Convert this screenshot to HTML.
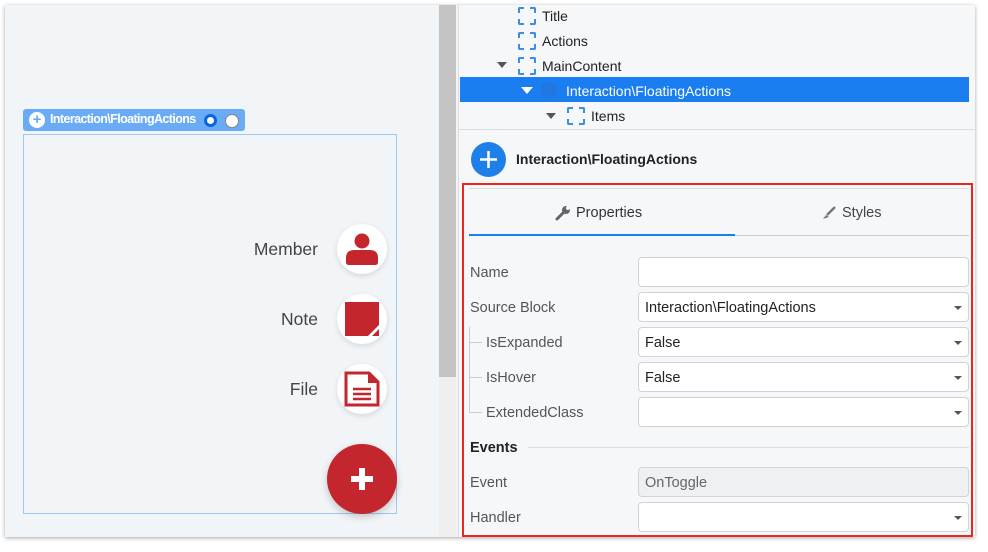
<!DOCTYPE html>
<html><head><meta charset="utf-8"><style>
*{box-sizing:border-box;margin:0;padding:0}
body{width:988px;height:552px;background:#fff;font-family:"Liberation Sans",sans-serif;position:relative;overflow:hidden}
.abs{position:absolute}
.frame{left:5px;top:5px;width:970px;height:532px;background:#f2f5f8;box-shadow:0 1px 4px rgba(0,0,0,.35)}
.tree{font-size:14px;color:#222}
.br{width:18px;height:18px;border:2px dashed #3b8de8;border-radius:2px}
.lbl{font-size:14.5px;color:#555}
.inp{left:638px;width:331px;height:30px;background:#fff;border:1px solid #cfd3d8;border-radius:4px;font-size:14.5px;color:#222;padding:6px 6px}
.inp .ar{position:absolute;right:6px;top:13px;border-left:4px solid transparent;border-right:4px solid transparent;border-top:4px solid #555}
.fab{width:50px;height:50px;border-radius:50%;background:#fff;box-shadow:0 2px 6px rgba(0,0,0,.12)}
.fl{font-size:17.5px;color:#444;text-align:right;width:80px}
</style></head><body>
<div class="abs frame"></div>
<div class="abs" style="left:439px;top:5px;width:17px;height:532px;background:#efefef"></div>
<div class="abs" style="left:439px;top:5px;width:17px;height:372px;background:#c3c3c3"></div>
<div class="abs" style="left:458px;top:5px;width:517px;height:532px;background:#f6f7f9;border-left:1px solid #ddd"></div>
<div class="abs" style="left:23px;top:109px;width:222px;height:22px;background:#6aabf5;border-radius:3px"></div>
<div class="abs" style="left:29px;top:112px;width:16px;height:16px;border-radius:50%;background:#fff;color:#6aabf5;font-size:15px;line-height:16px;text-align:center;font-weight:bold">+</div>
<div class="abs" style="left:50px;top:112px;font-size:12.5px;color:#fff;letter-spacing:-0.6px;font-weight:bold">Interaction\FloatingActions</div>
<div class="abs" style="left:204px;top:114px;width:13px;height:13px;border-radius:50%;background:#fff;border:3px solid #0a66e0"></div>
<div class="abs" style="left:225px;top:114px;width:14px;height:14px;border-radius:50%;background:#fff;border:1px solid #888"></div>
<div class="abs" style="left:23px;top:134px;width:374px;height:380px;border:1px solid #9fc9f5"></div>
<div class="abs fl" style="left:238px;top:239px">Member</div>
<div class="abs fl" style="left:238px;top:309px">Note</div>
<div class="abs fl" style="left:238px;top:379px">File</div>
<div class="abs fab" style="left:337px;top:224px"><svg width="50" height="50"><circle cx="25" cy="17" r="7.5" fill="#c4262e"/><path d="M9 34 Q9 26 17 26 L33 26 Q41 26 41 34 L41 38 Q41 41 38 41 L12 41 Q9 41 9 38Z" fill="#c4262e"/></svg></div>
<div class="abs fab" style="left:337px;top:294px"><svg width="50" height="50"><path d="M8 8 H42 V31 L31 42 H8Z" fill="#c4262e"/><path d="M35 42 L42 35 V42Z" fill="#c4262e"/></svg></div>
<div class="abs fab" style="left:337px;top:364px"><svg width="50" height="50"><path d="M9 9 H32 L41 18 V41 H9Z" fill="none" stroke="#c4262e" stroke-width="3"/><path d="M31 9 V19 H41" fill="#c4262e"/><path d="M16 25H34M16 30H34M16 35H34" stroke="#c4262e" stroke-width="2.5"/></svg></div>
<div class="abs" style="left:327px;top:444px;width:70px;height:70px;border-radius:50%;background:#c4262e;box-shadow:0 3px 8px rgba(0,0,0,.2)"><svg width="70" height="70"><path d="M35 24V46M24 35H46" stroke="#fff" stroke-width="6"/></svg></div>
<div class="abs br" style="left:518px;top:7px"></div><div class="abs tree" style="left:542px;top:8px">Title</div>
<div class="abs br" style="left:518px;top:32px"></div><div class="abs tree" style="left:542px;top:33px">Actions</div>
<div class="abs" style="left:497px;top:62px;border-left:5px solid transparent;border-right:5px solid transparent;border-top:6px solid #555"></div>
<div class="abs br" style="left:518px;top:57px"></div><div class="abs tree" style="left:542px;top:58px">MainContent</div>
<div class="abs" style="left:460px;top:77px;width:509px;height:25px;background:#1a7ef0"></div>
<div class="abs" style="left:521px;top:87px;border-left:6px solid transparent;border-right:6px solid transparent;border-top:7px solid #fff"></div>
<div class="abs" style="left:541px;top:82px;width:16px;height:16px;border-radius:50%;background:#1e78e0"></div>
<div class="abs tree" style="left:566px;top:83px;color:#fff">Interaction\FloatingActions</div>
<div class="abs" style="left:546px;top:113px;border-left:5px solid transparent;border-right:5px solid transparent;border-top:6px solid #555"></div>
<div class="abs br" style="left:567px;top:107px"></div><div class="abs tree" style="left:591px;top:108px">Items</div>
<div class="abs" style="left:459px;top:129px;width:516px;height:1px;background:#dcdcdc"></div>
<div class="abs" style="left:471px;top:142px;width:35px;height:35px;border-radius:50%;background:#1e7fe8"><svg width="35" height="35"><path d="M17.5 9V26M9 17.5H26" stroke="#fff" stroke-width="2.5"/></svg></div>
<div class="abs" style="left:516px;top:151px;font-size:14px;font-weight:bold;color:#222">Interaction\FloatingActions</div>
<div class="abs" style="left:462px;top:183px;width:511px;height:354px;border:2px solid #e8281c"></div>
<div class="abs" style="left:469px;top:188px;width:500px;height:1px;background:#ddd"></div>
<svg class="abs" style="left:555px;top:205px" width="16" height="16"><path d="M2 14 L9 7" stroke="#666" stroke-width="3" stroke-linecap="round"/><circle cx="11" cy="5" r="4" fill="#666"/><circle cx="13" cy="3" r="2" fill="#f6f7f9"/></svg>
<div class="abs" style="left:576px;top:205px;font-size:14.5px;color:#333">Properties</div>
<svg class="abs" style="left:821px;top:205px" width="16" height="16"><path d="M2 14 L5 10 L8 12Z" fill="#777"/><path d="M6 10 L14 2" stroke="#777" stroke-width="2.5"/></svg>
<div class="abs" style="left:842px;top:205px;font-size:14.5px;color:#444">Styles</div>
<div class="abs" style="left:469px;top:235px;width:500px;height:1px;background:#ccc"></div>
<div class="abs" style="left:469px;top:234px;width:266px;height:2px;background:#1a7ef0"></div>
<div class="abs lbl" style="left:470px;top:265px">Name</div>
<div class="abs inp" style="top:257px"></div>
<div class="abs lbl" style="left:470px;top:300px">Source Block</div>
<div class="abs inp" style="top:292px;padding-top:7px">Interaction\FloatingActions<span class="ar"></span></div>
<div class="abs" style="left:469px;top:327px;width:1px;height:86px;background:#ccc"></div>
<div class="abs" style="left:470px;top:342px;width:12px;height:1px;background:#ccc"></div>
<div class="abs" style="left:470px;top:377px;width:12px;height:1px;background:#ccc"></div>
<div class="abs" style="left:470px;top:412px;width:12px;height:1px;background:#ccc"></div>
<div class="abs lbl" style="left:486px;top:335px">IsExpanded</div>
<div class="abs inp" style="top:327px;padding-top:7px">False<span class="ar"></span></div>
<div class="abs lbl" style="left:486px;top:370px">IsHover</div>
<div class="abs inp" style="top:362px;padding-top:7px">False<span class="ar"></span></div>
<div class="abs lbl" style="left:486px;top:405px">ExtendedClass</div>
<div class="abs inp" style="top:397px"><span class="ar"></span></div>
<div class="abs" style="left:470px;top:440px;font-size:14.5px;font-weight:bold;color:#222">Events</div>
<div class="abs" style="left:528px;top:447px;width:441px;height:1px;background:#ddd"></div>
<div class="abs lbl" style="left:470px;top:475px">Event</div>
<div class="abs inp" style="top:467px;background:#eef0f2;color:#666;padding-top:7px">OnToggle</div>
<div class="abs lbl" style="left:470px;top:510px">Handler</div>
<div class="abs inp" style="top:502px"><span class="ar"></span></div>
</body></html>
